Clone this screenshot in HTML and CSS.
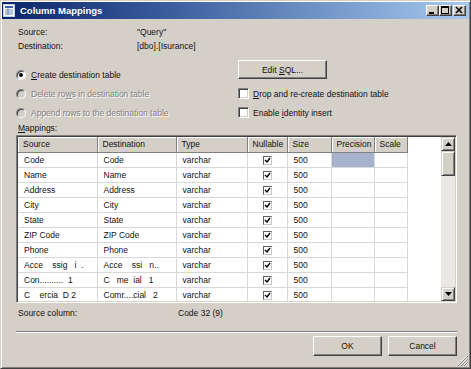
FILE: index.html
```html
<!DOCTYPE html>
<html>
<head>
<meta charset="utf-8">
<link rel="stylesheet" href="styles.css">
</head>
<body>
<div class="window">
  <div class="titlebar">
    <svg class="app-icon" width="12" height="13" viewBox="0 0 12 13">
      <rect x="0.5" y="0.5" width="11" height="12" fill="#fff" stroke="#c8d0e8"/>
      <rect x="2" y="2" width="8" height="2" fill="#3a5fb0"/>
      <path d="M2 6h8M2 8h8M2 10h8M5 4v7" stroke="#6f88c8" stroke-width="1"/>
    </svg>
    <span class="title">Column Mappings</span>
    <div class="tb-buttons">
      <div class="tb-btn"><svg width="11" height="9" viewBox="0 0 11 9"><rect x="2" y="6" width="5" height="2" fill="#000"/></svg></div>
      <div class="tb-btn"><svg width="11" height="9" viewBox="0 0 11 9"><rect x="1.5" y="0.5" width="7" height="7" fill="none" stroke="#000"/><rect x="1" y="0" width="8" height="2" fill="#000"/></svg></div>
      <div class="tb-btn tb-close"><svg width="11" height="9" viewBox="0 0 11 9"><path d="M2 1l6 6M8 1l-6 6" stroke="#000" stroke-width="1.6"/></svg></div>
    </div>
  </div>

  <div class="content">
    <div class="info">
      <div class="info-row"><span class="info-lbl">Source:</span><span>"Query"</span></div>
      <div class="info-row"><span class="info-lbl">Destination:</span><span>[dbo].[Isurance]</span></div>
    </div>

    <div class="options">
      <div class="opt-left">
        <div class="opt-row"><span class="radio checked"><span class="dot"></span></span><span><u>C</u>reate destination table</span></div>
        <div class="opt-row disabled"><span class="radio"></span><span>Delete ro<u>w</u>s in destination table</span></div>
        <div class="opt-row disabled"><span class="radio"></span><span>Append rows to the destination table</span></div>
        <div class="mappings-lbl"><u>M</u>appings:</div>
      </div>
      <div class="opt-right">
        <div class="btn edit-sql"><span>Edit <u>S</u>QL...</span></div>
        <div class="opt-row"><span class="checkbox"></span><span><u>D</u>rop and re-create destination table</span></div>
        <div class="opt-row"><span class="checkbox"></span><span>Enable <u>i</u>dentity insert</span></div>
      </div>
    </div>

    <div class="grid">
      <div class="grid-body">
        <table class="map">
          <colgroup>
            <col class="c-src"><col class="c-dst"><col class="c-type"><col class="c-null"><col class="c-size"><col class="c-prec"><col class="c-scale">
          </colgroup>
          <thead>
            <tr><th>Source</th><th>Destination</th><th>Type</th><th>Nullable</th><th>Size</th><th>Precision</th><th>Scale</th></tr>
          </thead>
          <tbody>
            <tr><td>Code</td><td>Code</td><td>varchar</td><td class="chk"><span class="cb"></span></td><td>500</td><td class="sel"></td><td></td></tr>
            <tr><td>Name</td><td>Name</td><td>varchar</td><td class="chk"><span class="cb"></span></td><td>500</td><td></td><td></td></tr>
            <tr><td>Address</td><td>Address</td><td>varchar</td><td class="chk"><span class="cb"></span></td><td>500</td><td></td><td></td></tr>
            <tr><td>City</td><td>City</td><td>varchar</td><td class="chk"><span class="cb"></span></td><td>500</td><td></td><td></td></tr>
            <tr><td>State</td><td>State</td><td>varchar</td><td class="chk"><span class="cb"></span></td><td>500</td><td></td><td></td></tr>
            <tr><td>ZIP Code</td><td>ZIP Code</td><td>varchar</td><td class="chk"><span class="cb"></span></td><td>500</td><td></td><td></td></tr>
            <tr><td>Phone</td><td>Phone</td><td>varchar</td><td class="chk"><span class="cb"></span></td><td>500</td><td></td><td></td></tr>
            <tr><td>Acce&nbsp;&nbsp;&nbsp;&nbsp;ssig&nbsp;&nbsp;&nbsp;i&nbsp;&nbsp;.</td><td>Acce&nbsp;&nbsp;&nbsp;&nbsp;ssi&nbsp;&nbsp;&nbsp;n..</td><td>varchar</td><td class="chk"><span class="cb"></span></td><td>500</td><td></td><td></td></tr>
            <tr><td>Con..........&nbsp;&nbsp;1</td><td>C&nbsp;&nbsp;&nbsp;me&nbsp;&nbsp;ial&nbsp;&nbsp;&nbsp;1</td><td>varchar</td><td class="chk"><span class="cb"></span></td><td>500</td><td></td><td></td></tr>
            <tr><td>C&nbsp;&nbsp;&nbsp;&nbsp;ercia&nbsp;&nbsp;D 2</td><td>Comr....cial&nbsp;&nbsp;&nbsp;2</td><td>varchar</td><td class="chk"><span class="cb"></span></td><td>500</td><td></td><td></td></tr>
          </tbody>
        </table>
      </div>
      <div class="vscroll">
        <div class="sb-btn"><svg width="7" height="4" viewBox="0 0 7 4"><path d="M3.5 0L7 4H0z" fill="#000"/></svg></div>
        <div class="sb-thumb"></div>
        <div class="sb-track"></div>
        <div class="sb-btn"><svg width="7" height="4" viewBox="0 0 7 4"><path d="M0 0h7L3.5 4z" fill="#000"/></svg></div>
      </div>
    </div>

    <div class="source-col"><span class="sc-lbl">Source column:</span><span>Code 32 (9)</span></div>
    <div class="separator"></div>
    <div class="footer">
      <div class="btn">OK</div>
      <div class="btn">Cancel</div>
    </div>
  </div>
  <svg class="grip" width="11" height="11" viewBox="0 0 11 11">
    <path d="M10 1L1 10M10 4L4 10M10 7L7 10" stroke="#fff" stroke-width="1"/>
    <path d="M11 1L1 11M11 4L4 11M11 7L7 11" stroke="#808080" stroke-width="1"/>
  </svg>
</div>
</body>
</html>
```

FILE: styles.css
```css
* { box-sizing: border-box; }
html, body { margin: 0; padding: 0; background: #d4d0c8; }
body {
  font-family: "Liberation Sans", Arial, sans-serif;
  font-size: 8.5px;
  color: #111;
}
.window {
  position: relative;
  width: 471px;
  height: 369px;
  background: #d4d0c8;
  border: 1px solid;
  border-color: #d4d0c8 #404040 #404040 #d4d0c8;
  box-shadow: inset 1px 1px #fff, inset -1px -1px #808080;
  padding: 1px;
  display: flex;
  flex-direction: column;
  overflow: hidden;
}
.titlebar {
  height: 17px;
  display: flex;
  align-items: center;
  padding: 0 3px 0 1px;
  background: linear-gradient(to right, #0a246a 0%, #3a5c9c 35%, #a6caf0 100%);
}
.app-icon { flex: none; margin-right: 5px; }
.title {
  color: #fff;
  font-weight: bold;
  font-size: 9.5px;
  flex: 1;
}
.tb-buttons { display: flex; }
.tb-btn {
  width: 13px;
  height: 11px;
  background: #d4d0c8;
  border: 1px solid;
  border-color: #fff #404040 #404040 #fff;
  box-shadow: inset -1px -1px #808080;
  display: flex;
  align-items: center;
  justify-content: center;
}
.tb-close { margin-left: 1px; }

.content {
  flex: 1;
  padding: 0 11px 0 14px;
  display: flex;
  flex-direction: column;
}
.info { margin-top: 6px; padding-left: 2px; }
.info-row { height: 14px; display: flex; align-items: center; }
.info-lbl { width: 119px; flex: none; }

.options { height: 82px; display: flex; }
.opt-left { width: 222px; flex: none; padding-top: 12px; display: flex; flex-direction: column; }
.opt-right { flex: 1; padding-top: 7px; display: flex; flex-direction: column; }
.opt-row { height: 19px; display: flex; align-items: center; }
.opt-row.disabled { color: #808080; text-shadow: 1px 1px #fff; }
.radio {
  width: 10px; height: 10px; border-radius: 50%;
  background: #fff;
  border: 1px solid;
  border-color: #808080 #fff #fff #808080;
  box-shadow: inset 1px 1px #404040;
  margin-right: 5px;
  display: flex; align-items: center; justify-content: center;
  flex: none;
}
.opt-row.disabled .radio { background: #d4d0c8; }
.dot { width: 4px; height: 4px; border-radius: 50%; background: #000; }
.checkbox {
  width: 11px; height: 11px;
  background: #fff;
  border: 1px solid;
  border-color: #808080 #fff #fff #808080;
  box-shadow: inset 1px 1px #404040, inset -1px -1px #d4d0c8;
  margin-right: 4px;
  flex: none;
}
.mappings-lbl { margin-top: 1px; height: 11px; line-height: 11px; padding-left: 2px; }

.btn {
  background: #d4d0c8;
  border: 1px solid;
  border-color: #fff #404040 #404040 #fff;
  box-shadow: inset -1px -1px #808080;
  display: flex; align-items: center; justify-content: center;
}
.edit-sql { width: 89px; height: 19px; margin-bottom: 5px; }

.grid {
  height: 168px;
  width: 441px;
  border: 1px solid;
  border-color: #808080 #fff #fff #808080;
  box-shadow: inset 1px 1px #404040, inset -1px -1px #d4d0c8;
  padding: 1px;
  display: flex;
  background: #fff;
}
.grid-body { flex: 1; overflow: hidden; background: #fff; }
table.map { border-collapse: collapse; table-layout: fixed; width: 389px; }
col.c-src, col.c-dst { width: 79px; }
col.c-type { width: 71px; }
col.c-null { width: 40px; }
col.c-size { width: 44px; }
col.c-prec { width: 43px; }
col.c-scale { width: 33px; }
.map th {
  height: 15px;
  padding: 0 0 0 5px;
  font-weight: normal;
  text-align: left;
  background: #d4d0c8;
  border-right: 1px solid #808080;
  border-bottom: 1px solid #808080;
  box-shadow: inset 1px 1px #fff;
  white-space: nowrap;
  overflow: hidden;
}
.map td {
  height: 15px;
  padding: 0 0 0 6px;
  border-right: 1px solid #d8d8d8;
  border-bottom: 1px solid #d8d8d8;
  white-space: nowrap;
  overflow: hidden;
}
.map td.chk { padding: 0; text-align: center; }
.map td.sel { background: #a9b2cc; }
.cb {
  display: inline-block;
  width: 9px; height: 9px;
  vertical-align: middle;
  border: 1px solid;
  border-color: #606060 #c8c8c8 #c8c8c8 #606060;
  background: #fff url("data:image/svg+xml,%3Csvg xmlns='http://www.w3.org/2000/svg' width='7' height='7'%3E%3Cpath d='M1 3l2 2 3-4' stroke='%23000' stroke-width='1.4' fill='none'/%3E%3C/svg%3E") center/7px 7px no-repeat;
}
.vscroll { width: 14px; flex: none; display: flex; flex-direction: column; }
.sb-btn {
  height: 14px;
  background: #d4d0c8;
  border: 1px solid;
  border-color: #d4d0c8 #404040 #404040 #d4d0c8;
  box-shadow: inset 1px 1px #fff, inset -1px -1px #808080;
  display: flex; align-items: center; justify-content: center;
  flex: none;
}
.sb-thumb {
  height: 25px;
  background: #d4d0c8;
  border: 1px solid;
  border-color: #d4d0c8 #404040 #404040 #d4d0c8;
  box-shadow: inset 1px 1px #fff, inset -1px -1px #808080;
  flex: none;
}
.sb-track { flex: 1; background: #eae8e4; }

.source-col { margin-top: 3px; height: 14px; display: flex; align-items: center; padding-left: 2px; }
.sc-lbl { width: 160px; flex: none; }
.separator { margin-top: 11px; height: 2px; border-top: 1px solid #808080; border-bottom: 1px solid #fff; width: 441px; }
.footer { margin-top: 3px; display: flex; justify-content: flex-end; gap: 6px; width: 441px; }
.footer .btn { width: 69px; height: 20px; }
.grip { position: absolute; right: 2px; bottom: 2px; }
```
